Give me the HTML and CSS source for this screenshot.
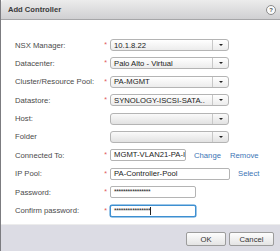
FILE: index.html
```html
<!DOCTYPE html>
<html lang="en">
<head>
    <meta charset="UTF-8">
    <title>Add Controller</title>
    <link rel="stylesheet" href="styles.css">
</head>
<body>
<div class="dialog">
    <!-- Title bar -->
    <div class="title-bar">
        <span class="title">Add Controller</span>
        <span class="help">?</span>
    </div>

    <!-- Form -->
    <div class="form">
        <label>NSX Manager:</label><span class="req">*</span>
        <div class="field"><div class="select"><span class="value">10.1.8.22</span><span class="arrow"></span></div></div>

        <label>Datacenter:</label><span class="req">*</span>
        <div class="field"><div class="select"><span class="value">Palo Alto - Virtual</span><span class="arrow"></span></div></div>

        <label>Cluster/Resource Pool:</label><span class="req">*</span>
        <div class="field"><div class="select"><span class="value">PA-MGMT</span><span class="arrow"></span></div></div>

        <label>Datastore:</label><span class="req">*</span>
        <div class="field"><div class="select"><span class="value">SYNOLOGY-ISCSI-SATA..</span><span class="arrow"></span></div></div>

        <label>Host:</label><span></span>
        <div class="field"><div class="select empty"><span class="value"></span><span class="arrow"></span></div></div>

        <label>Folder</label><span></span>
        <div class="field"><div class="select empty"><span class="value"></span><span class="arrow"></span></div></div>

        <label>Connected To:</label><span class="req">*</span>
        <div class="field">
            <div class="input short">MGMT-VLAN21-PA-I</div>
            <a class="link">Change</a>
            <a class="link">Remove</a>
        </div>

        <label>IP Pool:</label><span class="req">*</span>
        <div class="field">
            <div class="input wide">PA-Controller-Pool</div>
            <a class="link">Select</a>
        </div>

        <label>Password:</label><span class="req">*</span>
        <div class="field"><div class="input pass">****************</div></div>

        <label>Confirm password:</label><span class="req">*</span>
        <div class="field"><div class="input pass focus">****************<span class="caret"></span></div></div>
    </div>

    <!-- Footer -->
    <div class="footer">
        <button class="btn ok">OK</button>
        <button class="btn cancel">Cancel</button>
        <span class="grip"></span>
    </div>
</div>
</body>
</html>
```

FILE: styles.css
```css
body { margin: 0; font-family: "Liberation Sans", Arial, sans-serif; font-size: 7.7px; background: #fff; }
.dialog { width: 279px; height: 251px; border-left: 1px solid #7c7c80; display: flex; flex-direction: column; overflow: hidden; }
.title-bar { height: 19px; flex: none; display: flex; align-items: center; justify-content: space-between; padding: 0 4px 0 7px; background: linear-gradient(#ececec, #d0d0d2); border-bottom: 1px solid #a6a6a8; border-top-left-radius: 3px; }
.title { font-weight: bold; color: #3a3a3a; font-size: 7.6px; }
.help { width: 8px; height: 8px; border-radius: 50%; border: 1px solid #8a8a8a; background: #fafafa; color: #555; font-size: 6px; font-weight: bold; display: flex; align-items: center; justify-content: center; }
.form { flex: 1; display: grid; grid-template-columns: 86px 9px 1fr; grid-auto-rows: 12px; row-gap: 6.4px; align-items: center; padding: 19px 0 0 14px; }
.form label { color: #4a4a4a; white-space: nowrap; }
.req { color: #e05a5a; text-align: center; font-size: 7px; line-height: 12px; }
.field { display: flex; align-items: center; height: 12px; }
.select { width: 117px; height: 10px; border: 1px solid #b4b4b4; border-radius: 3px; background: linear-gradient(#ffffff, #ececec); display: flex; align-items: center; }
.select.empty { background: linear-gradient(#fafafa, #e2e2e2); }
.value { flex: 1; padding-left: 3px; color: #222; white-space: nowrap; overflow: hidden; }
.arrow { width: 15px; height: 10px; border-left: 1px solid #c8c8c8; position: relative; }
.arrow::after { content: ""; position: absolute; left: 6px; top: 4px; border-left: 2px solid transparent; border-right: 2px solid transparent; border-top: 2.5px solid #222; }
.input { height: 10px; border: 1px solid #b4b4b4; border-radius: 2px; background: #fff; color: #222; padding-left: 3px; line-height: 10px; white-space: nowrap; overflow: hidden; box-sizing: content-box; }
.input.short { width: 71px; }
.input.wide { width: 115px; }
.input.pass { width: 81px; font-size: 6.6px; letter-spacing: -0.3px; }
.input.focus { border-color: #3d8fd1; box-shadow: 0 0 0 0.5px #3d8fd1; }
.caret { display: inline-block; width: 1px; height: 8px; background: #222; vertical-align: middle; }
.link { color: #3c74b5; margin-left: 8px; }
.field .link + .link { margin-left: 9px; }
.footer { height: 27px; flex: none; background: #dcdce4; border-top: 1px solid #ececec; box-sizing: border-box; display: flex; justify-content: flex-end; align-items: flex-start; padding: 7px 6px 0 0; gap: 3px; position: relative; }
.btn { height: 14px; border: 1px solid #9c9c9c; border-radius: 2px; background: linear-gradient(#fdfdfd, #e4e4e4); font-family: "Liberation Sans", Arial, sans-serif; font-size: 7.7px; color: #333; padding: 0; }
.btn.ok { width: 40px; }
.btn.cancel { width: 45px; }
.grip { position: absolute; right: 1px; bottom: 1px; width: 5px; height: 5px; background: radial-gradient(circle, #999 0.6px, transparent 0.7px) 0 0 / 2px 2px; clip-path: polygon(100% 0, 100% 100%, 0 100%); }
```
